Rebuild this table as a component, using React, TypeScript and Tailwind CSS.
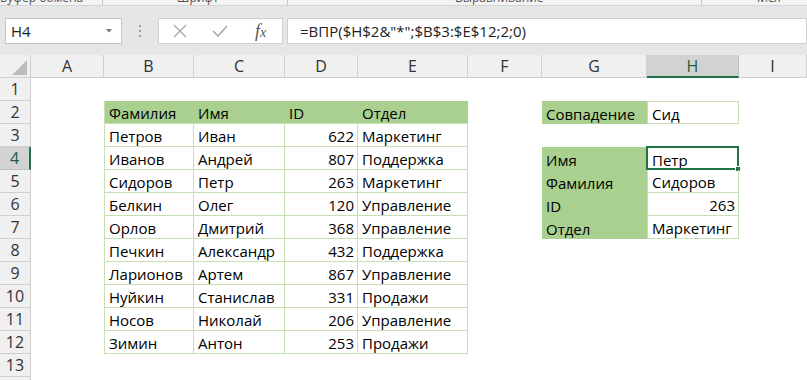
import React from "react";

const data: string[][] = [
  ["Петров", "Иван", "622", "Маркетинг"],
  ["Иванов", "Андрей", "807", "Поддержка"],
  ["Сидоров", "Петр", "263", "Маркетинг"],
  ["Белкин", "Олег", "120", "Управление"],
  ["Орлов", "Дмитрий", "368", "Управление"],
  ["Печкин", "Александр", "432", "Поддержка"],
  ["Ларионов", "Артем", "867", "Управление"],
  ["Нуйкин", "Станислав", "331", "Продажи"],
  ["Носов", "Николай", "206", "Управление"],
  ["Зимин", "Антон", "253", "Продажи"],
];

const right: [string, string, boolean][] = [
  ["Имя", "Петр", false],
  ["Фамилия", "Сидоров", false],
  ["ID", "263", true],
  ["Отдел", "Маркетинг", false],
];

const cols = ["A", "B", "C", "D", "E", "F", "G", "H", "I"];

type CellInfo = { text?: string; cls: string; num?: boolean; sel?: boolean };

function cellFor(r: number, c: number): CellInfo {
  if (c >= 1 && c <= 4 && r >= 2 && r <= 12) {
    const left = c === 1 ? " border-l" : "";
    if (r === 2) {
      const hdr = ["Фамилия", "Имя", "ID", "Отдел"][c - 1];
      return { text: hdr, cls: "bg-[#a9d08e] border-b border-[#c6e0b4]" + left };
    }
    const row = data[r - 3];
    return {
      text: row[c - 1],
      cls: "border-r border-b border-[#c6e0b4]" + left,
      num: c === 3,
    };
  }
  if (c === 6 && r === 2) return { text: "Совпадение", cls: "bg-[#a9d08e]" };
  if (c === 7 && r === 2) return { text: "Сид", cls: "border border-[#c6e0b4]" };
  if (c === 6 && r >= 4 && r <= 7) return { text: right[r - 4][0], cls: "bg-[#a9d08e]" };
  if (c === 7 && r >= 4 && r <= 7) {
    const top = r === 4 ? " border-t" : "";
    return {
      text: right[r - 4][1],
      cls: "border-r border-b border-l border-[#c6e0b4]" + top,
      num: right[r - 4][2],
      sel: r === 4,
    };
  }
  return { cls: "" };
}

export default function App() {
  const rows = Array.from({ length: 14 }, (_, i) => i + 1);
  return (
    <div className="w-[807px] h-[380px] overflow-hidden bg-white font-['Open_Sans',sans-serif] text-black">
      {/* ribbon group labels (cut off) */}
      <div className="h-[6px] overflow-hidden bg-[#f3f3f3] border-b border-[#d4d4d4]">
        <div className="flex h-[16px] -mt-[10px] text-[12px] leading-[16px] text-[#555]">
          <div className="w-[103px] border-r border-[#c8c8c8]">Буфер обмена</div>
          <div className="w-[185px] pl-[74px] border-r border-[#c8c8c8]">Шрифт</div>
          <div className="w-[414px] pl-[167px] border-r border-[#c8c8c8]">Выравнивание</div>
          <div className="flex-1 pl-[50px]">Числ</div>
        </div>
      </div>

      {/* formula bar */}
      <div className="h-[49px] bg-[#e6e6e6] pt-[12px] flex items-start">
        <div className="ml-[5px] w-[117px] h-[26px] bg-white border border-[#c6c6c6] flex items-center justify-between pl-[5px] pr-[9px]">
          <span className="text-[15px] text-[#222]">H4</span>
          <svg width="6" height="4" viewBox="0 0 6 4">
            <path d="M0 0 L6 0 L3 3.5 Z" fill="#777" />
          </svg>
        </div>
        <div className="w-[36px] h-[26px] flex flex-col items-center justify-center gap-[3px]">
          <span className="w-[2px] h-[2px] bg-[#9a9a9a]" />
          <span className="w-[2px] h-[2px] bg-[#9a9a9a]" />
          <span className="w-[2px] h-[2px] bg-[#9a9a9a]" />
        </div>
        <div className="w-[125px] h-[26px] bg-white border border-[#d0d0d0] flex items-center">
          <svg className="ml-[14px]" width="14" height="14" viewBox="0 0 14 14">
            <path d="M1 1 L13 13 M13 1 L1 13" stroke="#a8a8a8" strokeWidth="1.4" fill="none" />
          </svg>
          <svg className="ml-[25px]" width="16" height="12" viewBox="0 0 16 12">
            <path d="M1 6 L6 11 L15 1" stroke="#a8a8a8" strokeWidth="1.6" fill="none" />
          </svg>
          <span className="ml-[27px] text-[18px] italic text-[#555] font-['Liberation_Serif',serif] leading-none">
            f<span className="text-[14px]">x</span>
          </span>
        </div>
        <div className="ml-[4px] flex-1 h-[26px] bg-white border border-[#d0d0d0] flex items-center pl-[12px]">
          <span className="text-[15px] text-[#222] whitespace-nowrap">=ВПР($H$2&amp;"*";$B$3:$E$12;2;0)</span>
        </div>
      </div>

      {/* sheet grid */}
      <div className="grid grid-cols-[31px_73px_90px_91px_73px_110px_74px_105px_92px_68px] auto-rows-[23px]">
        <div className="bg-[#f0f0f0] border-r border-b border-[#cfcfcf] relative">
          <svg className="absolute left-0 top-0" width="30" height="22" viewBox="0 0 30 22">
            <path d="M12 20 L27 20 L27 5 Z" fill="#bcbcbc" />
          </svg>
        </div>
        {cols.map((l, i) =>
          i === 7 ? (
            <div
              key={l}
              className="bg-[#d2d2d2] border-r border-[#c0c0c0] border-b-2 border-b-[#217346] flex items-center justify-center text-[16px] text-[#1f5c3a]"
            >
              {l}
            </div>
          ) : (
            <div
              key={l}
              className="bg-[#f0f0f0] border-r border-b border-[#cfcfcf] flex items-center justify-center text-[16px] text-[#333]"
            >
              {l}
            </div>
          )
        )}

        {rows.map((r) => (
          <React.Fragment key={r}>
            {r === 4 ? (
              <div className="bg-[#d2d2d2] border-b border-[#c0c0c0] border-r-2 border-r-[#217346] flex items-center justify-center text-[16px] text-[#1f5c3a]">
                {r}
              </div>
            ) : (
              <div className="bg-[#f0f0f0] border-r border-b border-[#cfcfcf] flex items-center justify-center text-[16px] text-[#333]">
                {r}
              </div>
            )}
            {cols.map((_, c) => {
              const info = cellFor(r, c);
              return (
                <div
                  key={c}
                  className={
                    "relative flex items-center whitespace-nowrap text-[15px] leading-[23px] pt-[3px] " +
                    (info.num ? "justify-end pr-[3px] " : "pl-[4px] ") +
                    info.cls
                  }
                >
                  {info.text}
                  {info.sel && (
                    <div className="absolute -left-[2px] -top-[2px] -right-[1px] -bottom-[1px] border-2 border-[#217346]">
                      <div className="absolute -right-[4px] -bottom-[4px] w-[6px] h-[6px] bg-[#217346] border border-white" />
                    </div>
                  )}
                </div>
              );
            })}
          </React.Fragment>
        ))}
      </div>
    </div>
  );
}
